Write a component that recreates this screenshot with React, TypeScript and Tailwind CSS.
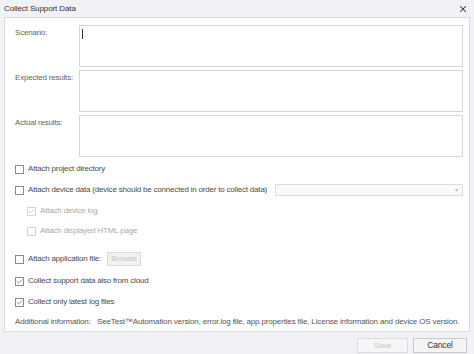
import { Check, X } from 'lucide-react';

function Box({ checked, disabled }: { checked?: boolean; disabled?: boolean }) {
  return (
    <span
      className={`w-[9px] h-[9px] border flex items-center justify-center bg-white shrink-0 ${
        disabled ? 'border-[#d4d4d4]' : 'border-[#8a8a8a]'
      }`}
    >
      {checked && <Check size={7} strokeWidth={2} className={disabled ? 'text-[#b0b0b0]' : 'text-[#444]'} />}
    </span>
  );
}

function Field({ label }: { label: string }) {
  return (
    <div className="flex">
      <div className="w-[64px] pt-[2px] text-[#666] whitespace-nowrap">{label}</div>
      <div className="flex-1 h-[42px] border border-[#d6d6d6] bg-white"></div>
    </div>
  );
}

export default function App() {
  return (
    <div
      className="w-[474px] h-[354px] bg-[#f1f2f6] flex flex-col text-[8px] tracking-[-0.2px] text-[#4a4a4a] overflow-hidden whitespace-nowrap"
      style={{ fontFamily: '"Liberation Sans", Arial, sans-serif' }}
    >
      <div className="h-[17px] shrink-0 flex items-center justify-between px-[4px] text-[#333] text-[8px] tracking-[-0.1px]">
        <span>Collect Support Data</span>
        <X size={10} strokeWidth={2.5} className="text-[#333] mr-[2px]" />
      </div>

      <div className="mx-[4px] h-[315px] shrink-0 bg-white border border-[#dadada] pl-[10px] pr-[6px] pt-[7px] flex flex-col">
        <div className="flex flex-col gap-[3px]">
          <div className="flex">
            <div className="w-[64px] pt-[2px] text-[#666]">Scenario:</div>
            <div className="flex-1 h-[42px] border border-[#d6d6d6] bg-white pl-[2px] pt-[3px]">
              <div className="w-[1px] h-[10px] bg-[#333]"></div>
            </div>
          </div>
          <Field label="Expected results:" />
          <Field label="Actual results:" />
        </div>

        <div className="flex items-center gap-[4px] mt-[7px] h-[10px]">
          <Box />
          <span>Attach project directory</span>
        </div>
        <div className="flex items-center gap-[4px] mt-[11px] h-[10px]">
          <Box />
          <span>Attach device data (device should be connected in order to collect data)</span>
          <div className="ml-auto w-[188px] h-[12px] border border-[#dcdcdc] bg-[#fafafa] flex items-center justify-end pr-[4px]">
            <span className="text-[#bbb] text-[6px]">▾</span>
          </div>
        </div>
        <div className="flex items-center gap-[4px] mt-[11px] h-[10px] pl-[12px] text-[#aaa]">
          <Box checked disabled />
          <span>Attach device log</span>
        </div>
        <div className="flex items-center gap-[4px] mt-[10px] h-[10px] pl-[12px] text-[#aaa]">
          <Box disabled />
          <span>Attach displayed HTML page</span>
        </div>
        <div className="flex items-center gap-[4px] mt-[18px] h-[10px]">
          <Box />
          <span>Attach application file:</span>
          <div className="ml-[2px] w-[34px] h-[14px] border border-[#dcdcdc] bg-[#f2f2f2] text-[#c4c4c4] flex items-center justify-center">
            Browse
          </div>
        </div>
        <div className="flex items-center gap-[4px] mt-[12px] h-[10px]">
          <Box checked />
          <span>Collect support data also from cloud</span>
        </div>
        <div className="flex items-center gap-[4px] mt-[11px] h-[10px]">
          <Box checked />
          <span>Collect only latest log files</span>
        </div>
        <div className="flex items-center mt-[10px] h-[10px] text-[#555] tracking-[-0.15px]">
          <span className="w-[82px]">Additional information:</span>
          <span>SeeTest™Automation version, error.log file, app.properties file, License information and device OS version.</span>
        </div>
      </div>

      <div className="flex-1 flex items-start justify-end gap-[5px] pr-[7px] pt-[6px]">
        <button className="w-[51px] h-[15px] border border-[#dcdcdc] bg-[#f6f6f6] text-[#c8c8c8] text-[8px]">Save</button>
        <button className="w-[54px] h-[15px] border border-[#c9c9c9] bg-[#f4f4f4] text-[#333] text-[8.5px]">Cancel</button>
      </div>
    </div>
  );
}
